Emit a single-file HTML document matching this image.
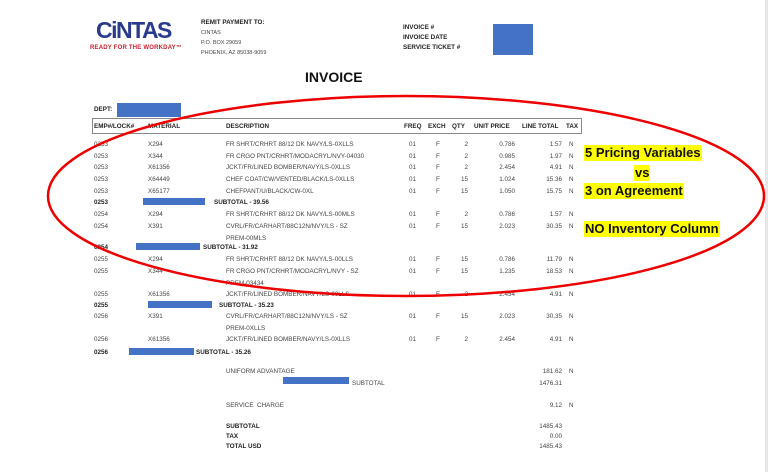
<!DOCTYPE html>
<html><head><meta charset="utf-8"><style>
body{margin:0;width:768px;height:472px;background:#fff;position:relative;overflow:hidden;font-family:"Liberation Sans",Arial,sans-serif;color:#444}
.a{position:absolute;white-space:nowrap;font-size:6.3px;line-height:7px}
.b{font-weight:bold;color:#222}
.r{text-align:right}
.blue{position:absolute;background:#4472c4}
.hl{position:absolute;background:#ffff00;color:#111;font-weight:bold;font-size:13px;line-height:16px;white-space:nowrap;font-family:"Liberation Sans",sans-serif;padding:0 1px}
</style></head><body>
<div style="position:absolute;right:0;top:0;width:3px;height:472px;background:#e6e6e6"></div>
<div class="a" style="left:96px;top:18px;font-size:23px;line-height:25px;font-weight:bold;color:#2a3a8c;letter-spacing:-1.5px">CiNTAS</div>
<div class="a" style="left:90px;top:45px;font-size:6px;font-weight:bold;color:#c8202a;letter-spacing:0.2px">READY FOR THE WORKDAY™</div>
<div class="a b" style="left:201px;top:19px">REMIT PAYMENT TO:</div>
<div class="a" style="left:201px;top:30px;font-size:5.5px">CINTAS</div>
<div class="a" style="left:201px;top:40px;font-size:5.5px">P.O. BOX 29059</div>
<div class="a" style="left:201px;top:50px;font-size:5.5px">PHOENIX, AZ 85038-9059</div>
<div class="a b" style="left:403px;top:24px">INVOICE #</div>
<div class="a b" style="left:403px;top:34px">INVOICE DATE</div>
<div class="a b" style="left:403px;top:44px">SERVICE TICKET #</div>
<div class="blue" style="left:493px;top:24px;width:40px;height:31px"></div>
<div class="a b" style="left:305px;top:69px;font-size:14px;line-height:16px;color:#111">INVOICE</div>
<div class="a b" style="left:94px;top:106px">DEPT:</div>
<div class="blue" style="left:117px;top:103px;width:64px;height:14px"></div>
<div style="position:absolute;left:92px;top:118px;width:488px;height:14px;border:1px solid #888"></div>
<div class="a b" style="left:94px;top:123px">EMP#/LOCK#</div>
<div class="a b" style="left:148px;top:123px">MATERIAL</div>
<div class="a b" style="left:226px;top:123px">DESCRIPTION</div>
<div class="a b" style="left:404px;top:123px">FREQ</div>
<div class="a b" style="left:428px;top:123px">EXCH</div>
<div class="a b" style="left:452px;top:123px">QTY</div>
<div class="a b" style="left:474px;top:123px">UNIT PRICE</div>
<div class="a b" style="left:522px;top:123px">LINE TOTAL</div>
<div class="a b" style="left:566px;top:123px">TAX</div>
<div id="rows"></div>
<script>
var R=[[141,"0253","X294","FR SHRT/CRHRT 88/12 DK NAVY/LS-0XLLS","2","0.786","1.57"],
[153,"0253","X344","FR CRGO PNT/CRHRT/MODACRYL/NVY-04030","2","0.985","1.97"],
[164,"0253","X61356","JCKT/FR/LINED BOMBER/NAVY/LS-0XLLS","2","2.454","4.91"],
[176,"0253","X64449","CHEF COAT/CW/VENTED/BLACK/LS-0XLLS","15","1.024","15.36"],
[188,"0253","X65177","CHEFPANT/U/BLACK/CW-0XL","15","1.050","15.75"],
[211,"0254","X294","FR SHRT/CRHRT 88/12 DK NAVY/LS-00MLS","2","0.786","1.57"],
[223,"0254","X391","CVRL/FR/CARHART/88C12N/NVY/LS - SZ","15","2.023","30.35"],
[256,"0255","X294","FR SHRT/CRHRT 88/12 DK NAVY/LS-00LLS","15","0.786","11.79"],
[268,"0255","X344","FR CRGO PNT/CRHRT/MODACRYL/NVY - SZ","15","1.235","18.53"],
[291,"0255","X61356","JCKT/FR/LINED BOMBER/NAVY/LS-00LLS","2","2.454","4.91"],
[313,"0256","X391","CVRL/FR/CARHART/88C12N/NVY/LS - SZ","15","2.023","30.35"],
[336,"0256","X61356","JCKT/FR/LINED BOMBER/NAVY/LS-0XLLS","2","2.454","4.91"]];
var h="";
R.forEach(function(r){var t=r[0];
h+='<div class="a" style="left:94px;top:'+t+'px">'+r[1]+'</div><div class="a" style="left:148px;top:'+t+'px">'+r[2]+'</div><div class="a" style="left:226px;top:'+t+'px">'+r[3]+'</div><div class="a" style="left:409px;top:'+t+'px">01</div><div class="a" style="left:436px;top:'+t+'px">F</div><div class="a r" style="left:440px;width:28px;top:'+t+'px">'+r[4]+'</div><div class="a r" style="left:480px;width:35px;top:'+t+'px">'+r[5]+'</div><div class="a r" style="left:520px;width:42px;top:'+t+'px">'+r[6]+'</div><div class="a" style="left:569px;top:'+t+'px">N</div>';});
[[235,"PREM-00MLS"],[280,"PREM-03434"],[325,"PREM-0XLLS"]].forEach(function(p){h+='<div class="a" style="left:226px;top:'+p[0]+'px">'+p[1]+'</div>';});
[[199,"0253",143,62,214,"39.56"],[244,"0254",136,64,203,"31.92"],[302,"0255",148,64,219,"35.23"],[349,"0256",129,65,196,"35.26"]].forEach(function(s){
h+='<div class="a b" style="left:94px;top:'+s[0]+'px">'+s[1]+'</div><div class="blue" style="left:'+s[2]+'px;top:'+(s[0]-1)+'px;width:'+s[3]+'px;height:7px"></div><div class="a b" style="left:'+s[4]+'px;top:'+s[0]+'px">SUBTOTAL - '+s[5]+'</div>';});
document.getElementById("rows").innerHTML=h;
</script>
<div class="a" style="left:226px;top:368px">UNIFORM ADVANTAGE</div>
<div class="a r" style="left:520px;width:42px;top:368px">181.62</div><div class="a" style="left:569px;top:368px">N</div>
<div class="blue" style="left:283px;top:377px;width:66px;height:7px"></div>
<div class="a" style="left:352px;top:380px">SUBTOTAL</div>
<div class="a r" style="left:520px;width:42px;top:380px">1476.31</div>
<div class="a" style="left:226px;top:402px">SERVICE&nbsp; CHARGE</div>
<div class="a r" style="left:520px;width:42px;top:402px">9.12</div><div class="a" style="left:569px;top:402px">N</div>
<div class="a b" style="left:226px;top:423px">SUBTOTAL</div><div class="a r" style="left:520px;width:42px;top:423px">1485.43</div>
<div class="a b" style="left:226px;top:433px">TAX</div><div class="a r" style="left:520px;width:42px;top:433px">0.00</div>
<div class="a b" style="left:226px;top:443px">TOTAL USD</div><div class="a r" style="left:520px;width:42px;top:443px">1485.43</div>
<svg style="position:absolute;left:0;top:0" width="768" height="472"><ellipse cx="406" cy="196" rx="358" ry="100" fill="none" stroke="#ee0000" stroke-width="2.5"/></svg>
<div class="hl" style="left:584px;top:145px">5 Pricing Variables</div>
<div class="hl" style="left:634px;top:165px">vs</div>
<div class="hl" style="left:584px;top:183px">3 on Agreement</div>
<div class="hl" style="left:584px;top:221px">NO Inventory Column</div>
</body></html>
